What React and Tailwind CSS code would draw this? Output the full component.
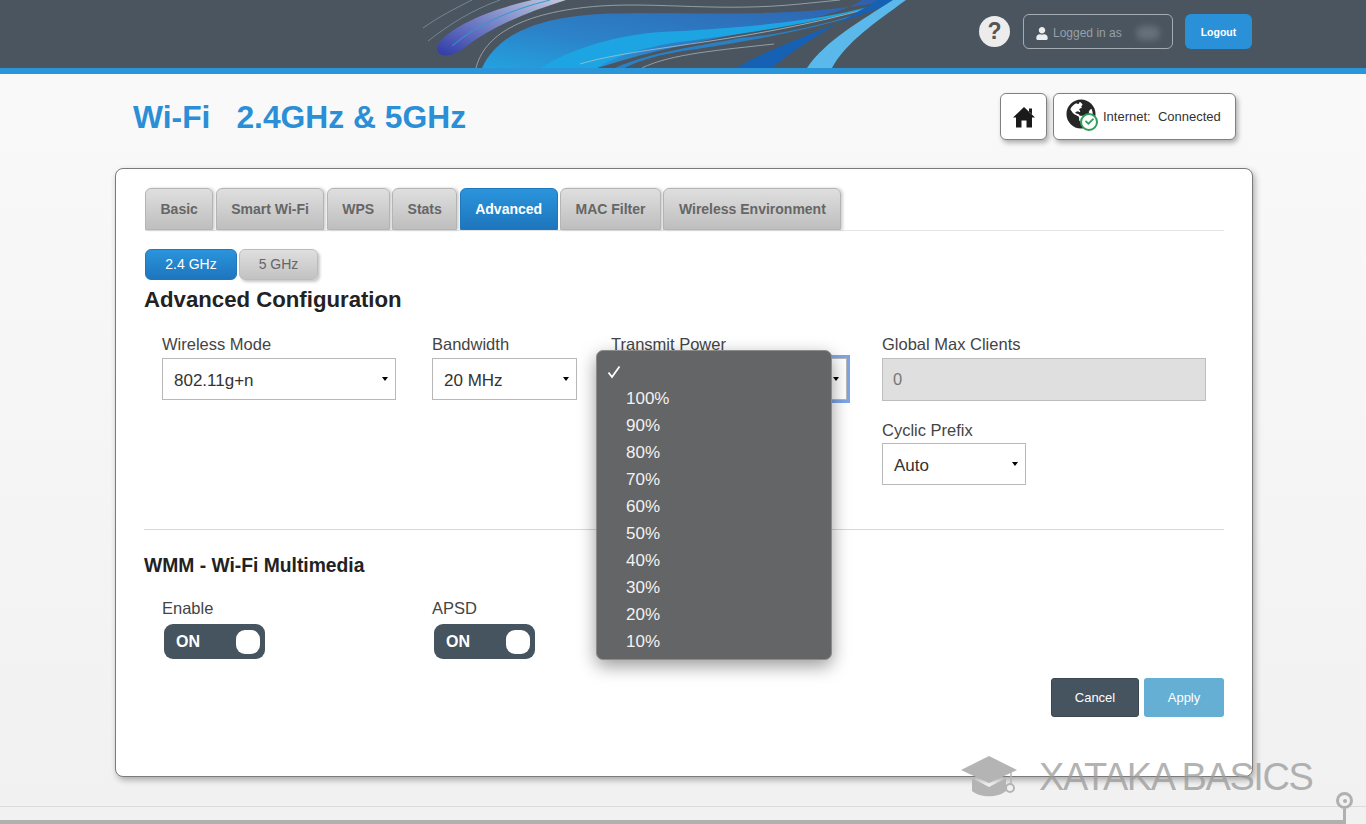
import { FaGlobeAmericas, FaCheck, FaUser } from "react-icons/fa";

const tabs = ["Basic", "Smart Wi-Fi", "WPS", "Stats", "Advanced", "MAC Filter", "Wireless Environment"];
const powers = ["100%", "90%", "80%", "70%", "60%", "50%", "40%", "30%", "20%", "10%"];

const HeaderArt = () => (
  <svg viewBox="0 0 520 68" className="absolute left-[400px] top-0 w-[520px] h-[68px]">
    <defs>
      <linearGradient id="streak" x1="0" y1="1" x2="1" y2="0">
        <stop offset="0" stopColor="#2f3aa6" />
        <stop offset="0.45" stopColor="#6f7cc4" />
        <stop offset="1" stopColor="#c4c9dc" />
      </linearGradient>
      <linearGradient id="swoosh" x1="0" y1="1" x2="1" y2="0">
        <stop offset="0" stopColor="#23a2e0" />
        <stop offset="0.35" stopColor="#2c82c8" />
        <stop offset="1" stopColor="#2f5fae" />
      </linearGradient>
    </defs>
    <path d="M38 44C52 26 88 10 132 0L166 0C128 12 92 26 64 48C52 58 36 58 37 47Z" fill="url(#streak)" />
    <path d="M52 46C78 24 110 10 150 0" stroke="#2a9bd8" strokeWidth="1" fill="none" />
    <path d="M23 28C40 16 56 8 72 0M28 41C50 24 72 10 100 0" stroke="#78949f" strokeWidth="0.8" fill="none" />
    <path d="M82 68C96 38 130 18 200 14C280 11 400 20 490 0L462 0C430 24 300 34 197 68Z" fill="url(#swoosh)" />
    <path d="M140 68C170 50 210 36 260 32C340 28 420 22 482 3C440 20 330 36 280 42C250 46 215 56 197 68Z" fill="#1da4e3" />
    <path d="M215 68C250 52 300 46 340 38C390 34 440 20 476 8C430 28 320 46 290 50C260 54 235 62 225 68Z" fill="#2b80c4" />
    <path d="M180 64C240 46 340 44 470 8" stroke="#a9c0cc" strokeWidth="0.8" fill="none" />
    <path d="M76 68C84 36 120 12 200 6C260 2 320 12 400 4L440 0" stroke="#9aa6ab" strokeWidth="0.9" fill="none" />
    <path d="M242 68C270 54 320 50 374 44" stroke="#9aa6ab" strokeWidth="0.9" fill="none" />
    <path d="M336 68C370 48 430 26 502 0L478 0C440 22 400 44 372 68Z" fill="#1661b4" />
    <path d="M407 68C426 40 462 20 493 0L506 0C476 22 446 42 432 68Z" fill="#5ab8ea" />
  </svg>
);

const Select = ({ value, width }) => (
  <div className={`${width} h-[42px] bg-white border border-[#b8b8b8] flex items-center justify-between pl-[11px] pr-[7px] text-[17px] text-[#333]`}>
    <span className="pt-[3px]">{value}</span>
    <span className="w-0 h-0 border-x-[3px] border-x-transparent border-t-[4px] border-t-black" />
  </div>
);

const Toggle = () => (
  <div className="ml-[2px] w-[101px] h-[35px] mt-[6px] bg-[#45545f] rounded-[9px] flex items-center justify-between pl-[12px] pr-[5px]">
    <span className="text-white font-bold text-[16px]">ON</span>
    <span className="w-[24px] h-[24px] bg-white rounded-[9px]" />
  </div>
);

const App = () => {
  return (
    <div className="relative w-[1366px] h-[824px] overflow-hidden flex flex-col bg-gradient-to-b from-[#fafafa] to-[#f1f1f1] font-['Liberation_Sans',Arial,sans-serif]">
      <header className="relative shrink-0 h-[74px] bg-[#4a5560] border-b-[6px] border-[#2a96d9] flex items-center justify-end pr-[114px] pb-[5px] gap-[12px]">
        <HeaderArt />
        <div className="relative w-[31px] h-[31px] rounded-full bg-[#ececec] flex items-center justify-center text-[#555] font-bold text-[23px]">?</div>
        <div className="relative w-[150px] h-[35px] border border-[#a5abb0] rounded-md flex items-center pl-[12px] pt-[3px] gap-[5px] text-[12px] text-[#97a0a6] ml-[1px]">
          <FaUser className="text-[#eeeeee] w-[12px] h-[13px]" />
          <span>Logged in as</span>
          <span className="w-[24px] h-[14px] ml-[9px] rounded-full bg-[#66717a] blur-[3px]" />
        </div>
        <button className="relative w-[67px] h-[35px] pt-[2px] bg-[#2a90d8] rounded-md text-white text-[10.5px] font-bold">Logout</button>
      </header>

      <div className="flex items-center justify-between h-[47px] mt-[19px] mb-[28px] pl-[133px] pr-[130px] shrink-0">
        <h1 className="mt-[3px] text-[31.8px] font-bold text-[#2a8fd6] flex gap-[26px]">
          <span>Wi-Fi</span>
          <span>2.4GHz &amp; 5GHz</span>
        </h1>
        <div className="flex gap-[6px]">
          <div className="w-[47px] h-[47px] bg-white border border-[#808080] rounded-md shadow-[2px_3px_5px_rgba(0,0,0,0.3)] flex items-center justify-center">
            <svg viewBox="0 0 22 22" className="w-[22px] h-[22px]">
              <path d="M11 1L22 11.5H19V21.5H13.5V14.5H8.5V21.5H3V11.5H0Z" fill="#1a1a1a" />
              <path d="M16 2.5H19V8.5L16 5.5Z" fill="#1a1a1a" />
            </svg>
          </div>
          <div className="w-[183px] h-[47px] bg-white border border-[#808080] rounded-md shadow-[2px_3px_5px_rgba(0,0,0,0.3)] flex items-center pl-[12px] gap-[6px] text-[13px] text-[#333]">
            <div className="relative w-[31px] h-[31px] -mt-[5px]">
              <FaGlobeAmericas className="w-[30px] h-[30px] text-[#262626]" />
              <span className="absolute -right-[1px] -bottom-[1px] w-[18px] h-[18px] rounded-full bg-white border-2 border-[#2f9e5b] flex items-center justify-center">
                <FaCheck className="w-[9px] h-[9px] text-[#2f9e5b]" />
              </span>
            </div>
            <span className="whitespace-pre">Internet:  Connected</span>
          </div>
        </div>
      </div>

      <main className="shrink-0 ml-[115px] w-[1138px] h-[609px] bg-white border border-[#7a7a7a] rounded-lg shadow-[2px_3px_6px_rgba(0,0,0,0.3)] pt-[19px] pl-[29px] pr-[28px] flex flex-col">
        <nav className="flex gap-[2.4px] h-[43px] border-b border-[#e4e4e4] shrink-0">
          {tabs.map((t) =>
            t === "Advanced" ? (
              <div key={t} className="h-[42px] px-[14.5px] rounded-t-md bg-gradient-to-b from-[#2b94dc] to-[#1d76bd] border border-[#1f78bd] flex items-center text-white font-bold text-[14px]">{t}</div>
            ) : (
              <div key={t} className="h-[42px] px-[14.5px] rounded-t-md bg-gradient-to-b from-[#dfdfdf] to-[#bebebe] border border-[#b4b4b4] shadow-[2px_0_3px_rgba(0,0,0,0.18)] flex items-center text-[#666] font-bold text-[14px]">{t}</div>
            )
          )}
        </nav>

        <div className="flex gap-[2px] mt-[18px] shrink-0">
          <div className="w-[92px] h-[31px] rounded-md bg-gradient-to-b from-[#2b94dc] to-[#1d76bd] border border-[#1f78bd] flex items-center justify-center text-white text-[14px]">2.4 GHz</div>
          <div className="w-[79px] h-[31px] rounded-md bg-gradient-to-b from-[#dfdfdf] to-[#c2c2c2] border border-[#bcbcbc] shadow-[2px_2px_3px_rgba(0,0,0,0.22)] flex items-center justify-center text-[#666] text-[14px]">5 GHz</div>
        </div>

        <h2 className="mt-[6px] -ml-[1px] h-[28px] leading-[28px] text-[22.2px] font-bold text-[#222]">Advanced Configuration</h2>

        <div className="mt-[20px] ml-[17px] grid grid-cols-[270px_179px_271px_324px] text-[16.5px] text-[#444] h-[195px] shrink-0">
          <div>
            <div className="h-[20px] leading-[20px] mb-[4px]">Wireless Mode</div>
            <Select value="802.11g+n" width="w-[234px]" />
          </div>
          <div>
            <div className="h-[20px] leading-[20px] mb-[4px]">Bandwidth</div>
            <Select value="20 MHz" width="w-[145px]" />
          </div>
          <div className="relative">
            <div className="h-[20px] leading-[20px] mb-[4px]">Transmit Power</div>
            <div className="w-[236px] h-[42px] bg-white border border-[#b8b8b8] ring-[3px] ring-[#7da5e6] flex items-center justify-end pr-[7px]">
              <span className="w-0 h-0 border-x-[3px] border-x-transparent border-t-[4px] border-t-black" />
            </div>
            <div className="absolute left-[-15px] top-[16px] w-[236px] h-[310px] z-10 bg-[#646566] border border-[#8c8c8c] rounded-[7px] shadow-[0_6px_18px_rgba(0,0,0,0.4)] pt-[7px] text-[17px] text-[#f2f2f2]">
              <div className="h-[27px] pl-[10px] flex items-center">
                <svg viewBox="0 0 14 14" className="w-[14px] h-[14px]">
                  <path d="M1.5 7.5L5 12L12.5 1.5" stroke="#fff" strokeWidth="1.8" fill="none" />
                </svg>
              </div>
              {powers.map((p) => (
                <div key={p} className="h-[27px] leading-[27px] pl-[29px]">{p}</div>
              ))}
            </div>
          </div>
          <div>
            <div className="h-[20px] leading-[20px] mb-[4px]">Global Max Clients</div>
            <div className="w-[324px] h-[43px] bg-[#dfdfdf] border border-[#bdbdbd] flex items-center pl-[10px] text-[#777]">0</div>
            <div className="h-[20px] leading-[20px] mt-[19px] mb-[3px]">Cyclic Prefix</div>
            <Select value="Auto" width="w-[144px]" />
          </div>
        </div>

        <hr className="border-t border-[#d8d8d8] -ml-[1px] shrink-0" />

        <h3 className="mt-[24px] -ml-[1px] h-[24px] leading-[24px] text-[19.3px] font-bold text-[#222]">WMM - Wi-Fi Multimedia</h3>

        <div className="mt-[20px] ml-[17px] grid grid-cols-[270px_145px] text-[16.5px] text-[#444] shrink-0">
          <div>
            <div className="h-[20px] leading-[20px]">Enable</div>
            <Toggle />
          </div>
          <div>
            <div className="h-[20px] leading-[20px]">APSD</div>
            <Toggle />
          </div>
        </div>

        <div className="flex justify-end gap-[5px] mt-[19px] shrink-0">
          <button className="w-[88px] h-[39px] bg-[#45545f] border border-[#3a4750] rounded-[3px] text-white text-[13px]">Cancel</button>
          <button className="w-[80px] h-[39px] bg-[#65aed4] rounded-[3px] text-white text-[13px]">Apply</button>
        </div>
      </main>

      <div className="shrink-0 mt-[29px] h-[1px] bg-[#dcdcdc]" />
      <div className="shrink-0 mt-[13px] w-[1346px] h-[4px] bg-[#b0b0b0]" />

      <div className="absolute left-[960px] top-[756px] flex items-center gap-[21px] text-[#9a9a9a]/75">
        <svg viewBox="0 0 58 42" className="w-[58px] h-[42px]">
          <path d="M29 0L57 14L29 27L1 14Z" fill="#b4b4b4" />
          <path d="M12 22L29 31L46 22V35C38 42 20 42 12 35Z" fill="#b4b4b4" />
          <path d="M51 16V28" stroke="#b4b4b4" strokeWidth="1.5" />
          <circle cx="50" cy="32" r="4" fill="none" stroke="#b4b4b4" strokeWidth="2" />
        </svg>
        <span className="text-[38px] leading-[42px] tracking-[-1.45px]">XATAKA BASICS</span>
      </div>

      <div className="absolute left-[1336px] top-[792px] w-[17px] h-[17px] rounded-full border-[3px] border-[#b0b0b0] bg-[#f1f1f1] flex items-center justify-center">
        <span className="w-[4px] h-[4px] rounded-full bg-[#b0b0b0]" />
      </div>
      <div className="absolute left-[1343px] top-[809px] w-[3px] h-[15px] bg-[#b0b0b0]" />
    </div>
  );
};

export default App;
